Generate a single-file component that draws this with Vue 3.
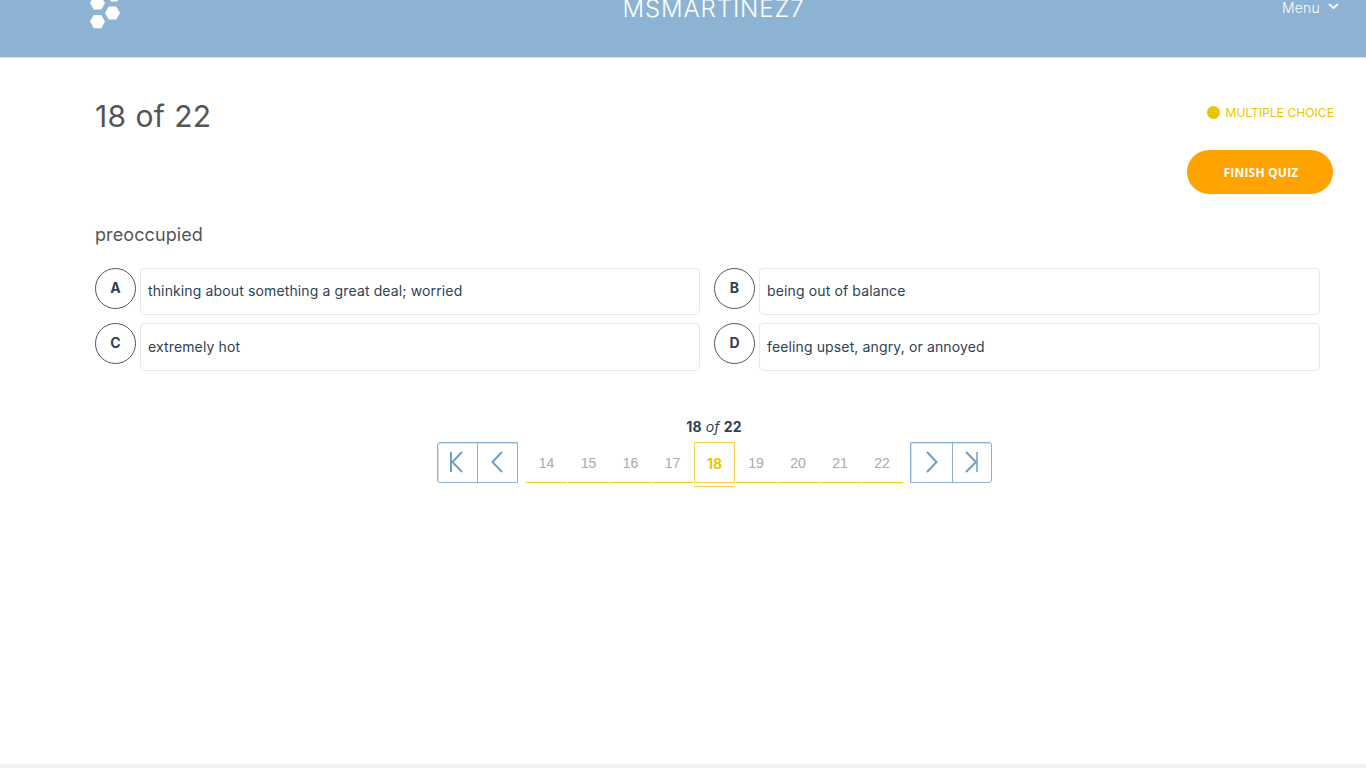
<script setup>
const options = [
  { letter: 'A', text: 'thinking about something a great deal; worried' },
  { letter: 'B', text: 'being out of balance' },
  { letter: 'C', text: 'extremely hot' },
  { letter: 'D', text: 'feeling upset, angry, or annoyed' },
]
const before = [14, 15, 16, 17]
const after = [19, 20, 21, 22]
</script>

<template>
  <div class="page">
    <header class="topbar">
      <div class="topbar-inner">
        <svg class="logo" width="34" height="29" viewBox="0 0 34 29" fill="#fff">
          <polygon points="2,3 5.7,-3.2 13.3,-3.2 17,3 13.3,9.6 5.7,9.6" />
          <polygon points="17,13 20.7,6.4 28.3,6.4 32,13 28.3,19.6 20.7,19.6" />
          <polygon points="2,21.5 5.7,15 13.3,15 17,21.5 13.3,28.2 5.7,28.2" />
          <polygon points="20,-2 23,-6 29,-6 32,-2 29,1.5 23,1.5" />
        </svg>
        <div class="brand">MSMARTINEZ7</div>
        <div class="menu">
          <span>Menu</span>
          <svg width="11" height="7" viewBox="0 0 11 7" fill="none" stroke="#fff" stroke-width="2">
            <path d="M1 1l4.500 4 4.500-4" />
          </svg>
        </div>
      </div>
    </header>

    <main class="content">
      <div class="head">
        <h1 class="count">18 of 22</h1>
        <div class="head-side">
          <div class="kind"><i class="dot"></i>MULTIPLE CHOICE</div>
          <button class="finish">FINISH QUIZ</button>
        </div>
      </div>

      <p class="question">preoccupied</p>

      <div class="options">
        <div v-for="o in options" :key="o.letter" class="option">
          <div class="letter">{{ o.letter }}</div>
          <div class="answer">{{ o.text }}</div>
        </div>
      </div>

      <div class="pager">
        <div class="pager-label"><b>18</b> <em>of</em> <b>22</b></div>
        <div class="pager-row">
          <div class="nav nav-left">
            <button class="nav-btn">
              <svg width="16" height="22" viewBox="0 0 16 22" fill="none" stroke="#6c9fc9" stroke-width="2">
                <path d="M2 1v20M13 1L3.500 11 13 21" />
              </svg>
            </button>
            <button class="nav-btn">
              <svg width="14" height="22" viewBox="0 0 14 22" fill="none" stroke="#6c9fc9" stroke-width="2">
                <path d="M12 1L2.500 11 12 21" />
              </svg>
            </button>
          </div>
          <div class="pages">
            <span v-for="n in before" :key="n" class="pg">{{ n }}</span>
            <span class="pg active">18</span>
            <span v-for="n in after" :key="n" class="pg pg-after">{{ n }}</span>
          </div>
          <div class="nav nav-right">
            <button class="nav-btn">
              <svg width="14" height="22" viewBox="0 0 14 22" fill="none" stroke="#6c9fc9" stroke-width="2">
                <path d="M2 1l9.500 10L2 21" />
              </svg>
            </button>
            <button class="nav-btn">
              <svg width="14" height="22" viewBox="0 0 14 22" fill="none" stroke="#6c9fc9" stroke-width="2">
                <path d="M1 1l10 10L1 21" />
                <path d="M12 1v20" stroke-width="1.500" />
              </svg>
            </button>
          </div>
        </div>
      </div>
    </main>

    <footer class="foot"></footer>
  </div>
</template>

<style>
html, body { margin: 0; background: #fff; overflow: hidden; }
</style>

<style scoped>
.page {
  height: 768px;
  display: flex;
  flex-direction: column;
  font-family: Inter, "Liberation Sans", sans-serif;
  overflow: hidden;
}
.topbar {
  height: 57px;
  flex: none;
  background: #8cb3d4;
  border-bottom: 1px solid #d3dde6;
  overflow: hidden;
}
.topbar-inner {
  display: grid;
  grid-template-columns: 1fr auto 1fr;
  align-items: start;
  padding: 0 27px 0 88px;
}
.logo { display: block; overflow: visible; }
.brand {
  margin-top: -6px;
  font-size: 24px;
  line-height: 29px;
  font-weight: 300;
  letter-spacing: 0.9px;
  color: #fff;
}
.menu {
  justify-self: end;
  display: flex;
  align-items: center;
  gap: 8px;
  margin-top: -2px;
  font-size: 14px;
  line-height: 20px;
  font-weight: 300;
  letter-spacing: 0.2px;
  color: #fff;
}
.menu svg { margin-top: -3px; }
.content { flex: 1; padding: 0 33px 0 95px; }
.head { display: flex; justify-content: space-between; align-items: flex-start; }
.count {
  margin: 40px 0 0;
  font-size: 30px;
  line-height: 36px;
  font-weight: 400;
  letter-spacing: 0.4px;
  color: #555;
}
.head-side { display: flex; flex-direction: column; align-items: flex-end; }
.kind {
  display: flex;
  align-items: center;
  margin: 47px -1px 0 0;
  font-size: 12px;
  line-height: 15px;
  letter-spacing: 0.07px;
  color: #eac400;
}
.dot {
  width: 13px;
  height: 13px;
  border-radius: 50%;
  background: #eac400;
  margin-right: 5px;
}
.finish {
  margin-top: 30px;
  width: 146px;
  height: 44px;
  padding: 0 0 0 2px;
  border: 0;
  border-radius: 22px;
  background: #ffa300;
  color: #fff;
  font-family: "Open Sans", sans-serif;
  font-size: 12px;
  font-weight: 700;
  letter-spacing: 0.2px;
}
.question {
  margin: 30px 0 0;
  font-size: 18px;
  line-height: 22px;
  letter-spacing: 0.1px;
  color: #555;
}
.options {
  display: grid;
  grid-template-columns: 605px 606px;
  column-gap: 14px;
  row-gap: 8px;
  margin-top: 21.750px;
}
.option { display: flex; gap: 3.500px; align-items: flex-start; }
.letter {
  box-sizing: border-box;
  width: 41px;
  height: 41px;
  flex: none;
  display: flex;
  align-items: center;
  justify-content: center;
  padding-bottom: 2px;
  border: 1px solid #555;
  border-radius: 50%;
  font-size: 14px;
  font-weight: 700;
  color: #2f4156;
}
.answer {
  box-sizing: border-box;
  flex: 1;
  height: 47.5px;
  display: flex;
  align-items: center;
  padding: 0 7px 2px 7.500px;
  border: 1px solid #dfeaf4;
  border-radius: 4px;
  font-size: 14px;
  letter-spacing: 0.13px;
  color: #2f4156;
}
.pager {
  width: 1238px;
  margin-top: 46.750px;
  display: flex;
  flex-direction: column;
  align-items: center;
}
.pager-label {
  font-size: 14px;
  line-height: 17px;
  letter-spacing: 0.15px;
  color: #2f4156;
}
.pager-label b { font-weight: 700; }
.pager-label em { font-weight: 400; }
.pager-row { display: flex; margin-top: 7px; height: 46px; }
.nav {
  box-sizing: border-box;
  display: flex;
  height: 41px;
  width: 81px;
  flex: none;
  border: 1px solid #8cb3d4;
}
.nav-left { border-radius: 3px 0 0 3px; box-shadow: inset 1px 1px 0 #d4e2ee; }
.nav-right { width: 82px; border-radius: 0 3px 3px 0; box-shadow: inset 1px 1px 0 #d4e2ee; }
.nav-btn {
  flex: 1;
  padding: 0;
  display: flex;
  align-items: center;
  justify-content: center;
  border: 0;
  background: none;
}
.nav-right .nav-btn:first-child { flex: 0 0 41px; padding-left: 2px; }
.nav-right .nav-btn + .nav-btn { padding-left: 1px; }
.nav-btn + .nav-btn { border-left: 1px solid #8cb3d4; }
.pages { display: flex; gap: 1px; margin: 0 7px 0 8px; align-items: flex-start; }
.pg {
  box-sizing: border-box;
  width: 41px;
  height: 41px;
  display: flex;
  align-items: center;
  justify-content: center;
  padding: 2px 0 0 1px;
  border-bottom: 1px solid #f3cd16;
  font-family: "Liberation Sans", sans-serif;
  font-size: 14px;
  color: #aaa;
}
.pg-after { padding-left: 0; }
.pg.active {
  position: relative;
  border: 1px solid #f3d24a;
  color: #eac400;
  font-family: Inter, sans-serif;
  font-weight: 700;
}
.pg.active::after {
  content: "";
  position: absolute;
  left: -1px;
  right: -1px;
  bottom: -5px;
  height: 1px;
  background: #f3d24a;
}
.foot { height: 4px; flex: none; background: #f2f2f2; }
</style>
